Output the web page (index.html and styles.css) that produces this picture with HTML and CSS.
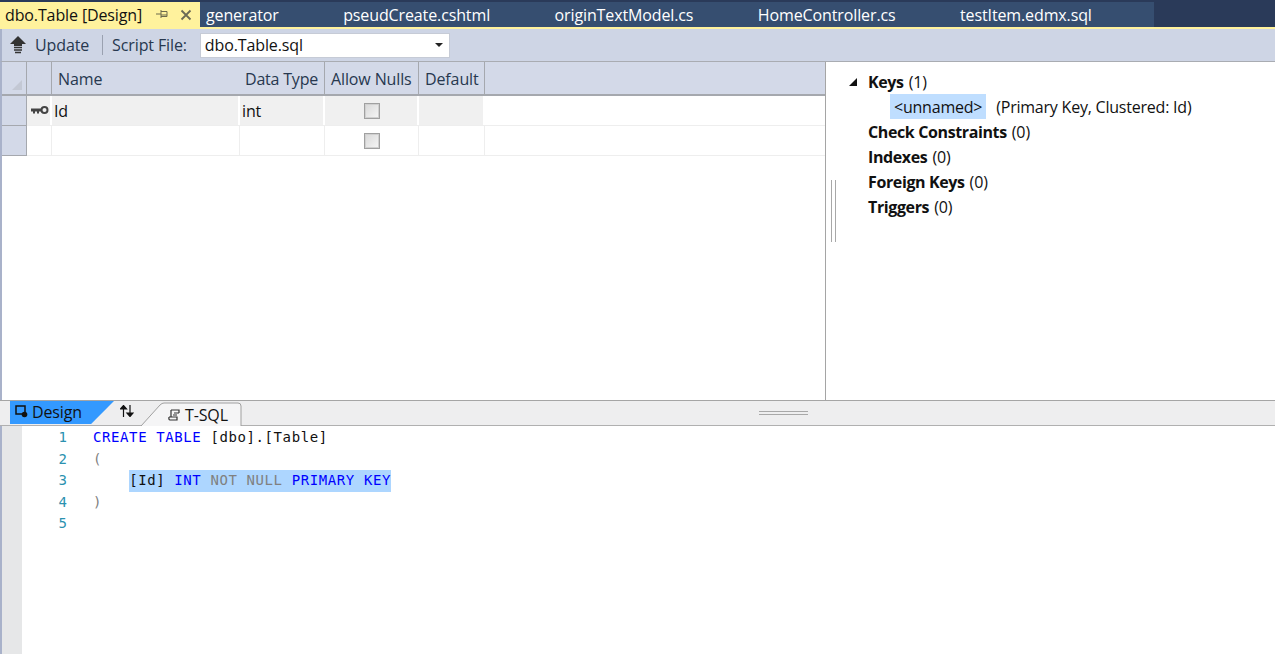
FILE: index.html
```html
<!DOCTYPE html>
<html lang="en">
<head>
<meta charset="utf-8">
<title>dbo.Table [Design]</title>
<link rel="stylesheet" href="styles.css">
</head>
<body>
<div class="tabbar">
  <div class="tab active"><span class="tab-title">dbo.Table [Design]</span>
    <svg class="pin" width="12" height="10" viewBox="0 0 12 10"><path d="M0 5h5M5 1v8M5 2.500h6v5H5M5 6h6" fill="none" stroke="#6d6a4c" stroke-width="1"/></svg>
    <svg class="close" width="12" height="12" viewBox="0 0 12 12"><path d="M1.500 1.500l9 9M10.500 1.500l-9 9" stroke="#6b6a55" stroke-width="1.800" fill="none"/></svg>
  </div>
  <div class="tab">generator</div>
  <div class="tab">pseudCreate.cshtml</div>
  <div class="tab">originTextModel.cs</div>
  <div class="tab">HomeController.cs</div>
  <div class="tab">testItem.edmx.sql</div>
</div>
<div class="accent"></div>
<div class="toolbar">
  <svg class="update-icon" width="18" height="20" viewBox="0 0 18 20"><path d="M9 1L17 9H13V11H5V9H1Z" fill="#333"/><path d="M5 12.500h8M5 15h8M6 17.500h6" stroke="#333" stroke-width="1.600"/></svg>
  <span class="tool-label">Update</span>
  <span class="tool-sep"></span>
  <span class="tool-label script">Script File:</span>
  <div class="combo"><span>dbo.Table.sql</span><i class="combo-arrow"></i></div>
</div>
<div class="designer">
  <div class="grid-pane">
    <div class="row head">
      <div class="cell sel"><i class="corner"></i></div>
      <div class="cell key"></div>
      <div class="cell name">Name</div>
      <div class="cell type">Data Type</div>
      <div class="cell nulls">Allow Nulls</div>
      <div class="cell dflt">Default</div>
    </div>
    <div class="row filled">
      <div class="cell sel"></div>
      <div class="cell key"><svg width="18" height="9" viewBox="0 0 18 9"><path d="M0 2.500h10v3H8v2H6v-2H4v2H2v-2H0Z" fill="#444"/><circle cx="13.500" cy="4" r="3" fill="none" stroke="#444" stroke-width="2"/></svg></div>
      <div class="cell name data">Id</div>
      <div class="cell type data">int</div>
      <div class="cell nulls"><i class="check"></i></div>
      <div class="cell dflt"></div>
    </div>
    <div class="row">
      <div class="cell sel"></div>
      <div class="cell key"></div>
      <div class="cell name"></div>
      <div class="cell type"></div>
      <div class="cell nulls"><i class="check"></i></div>
      <div class="cell dflt"></div>
    </div>
  </div>
  <div class="props">
    <i class="grip"></i>
    <div class="prop"><i class="tri"></i><b>Keys</b> (1)</div>
    <div class="prop-key"><span class="unnamed">&lt;unnamed&gt;</span><span>(Primary Key, Clustered: Id)</span></div>
    <div class="prop"><b>Check Constraints</b> (0)</div>
    <div class="prop"><b>Indexes</b> (0)</div>
    <div class="prop"><b>Foreign Keys</b> (0)</div>
    <div class="prop"><b>Triggers</b> (0)</div>
  </div>
</div>
<div class="viewbar">
  <div class="view-design">
    <svg width="13" height="13" viewBox="0 0 13 13"><rect x="1" y="1" width="9" height="8" fill="none" stroke="#111" stroke-width="1.500"/><circle cx="9.500" cy="9.500" r="2.800" fill="#111"/></svg>
    <span>Design</span>
  </div>
  <svg class="swap" width="14" height="12" viewBox="0 0 14 12"><path d="M3.500 12V3M0.500 4L3.500 0.500 6.500 4Z M10 0V9M7 8L10 11.500 13 8Z" fill="#111" stroke="#111" stroke-width="1.200"/></svg>
  <div class="view-sql">
    <svg class="sql-shape" width="101" height="24" viewBox="0 0 101 24"><path d="M0 24L19 3Q21 1 23 1H97Q100 1 100 4V24" fill="#f5f5f6" stroke="#a0a0a0"/></svg>
    <svg class="sql-icon" width="13" height="12" viewBox="0 0 13 12"><path d="M3 1h8v3M3 1v7M1 8h8v3H2Q0.500 11 1 8M6 4h5M5 6h4" fill="none" stroke="#333" stroke-width="1.200"/></svg>
    <span>T-SQL</span>
  </div>
  <div class="view-grip"></div>
</div>
<div class="editor">
  <div class="margin"></div>
  <div class="nums"><div>1</div><div>2</div><div>3</div><div>4</div><div>5</div></div>
  <pre class="code"><span class="kw">CREATE TABLE</span> [dbo].[Table]
<span class="gr">(</span>
    <span class="hl">[Id] <span class="kw">INT</span> <span class="mut">NOT NULL</span> <span class="kw">PRIMARY KEY</span></span>
<span class="gr">)</span>
</pre>
</div>
</body>
</html>
```
FILE: styles.css
```css
* { box-sizing: border-box; }
html, body { height: 100%; }
body {
  margin: 0;
  height: 654px;
  overflow: hidden;
  display: flex;
  flex-direction: column;
  background: #fff;
  color: #111;
  font-family: "Open Sans", "Noto Sans", sans-serif;
  font-size: 16px;
  letter-spacing: -0.12px;
}
i { display: block; }

/* document tabs */
.tabbar {
  height: 27px;
  flex: none;
  display: flex;
  align-items: flex-end;
  background: #2a3a59;
}
.tab {
  height: 25px;
  padding: 0 58.500px 0 6px;
  display: flex;
  align-items: center;
  color: #fff;
  background: #364e70;
  white-space: nowrap;
}
.tab:last-child { padding-right: 62px; }
.tab.active {
  width: 200px;
  padding: 0 0 0 6px;
  background: #fff29d;
  color: #111;
}
.tab-title { width: 150px; flex: none; margin-left: -1px; margin-right: 1px; }
.pin { flex: none; margin-top: -2px; }
.close { flex: none; margin-left: 12px; }
.accent { height: 2px; flex: none; background: #fff29d; }

/* toolbar */
.toolbar {
  height: 33px;
  flex: none;
  display: flex;
  align-items: center;
  padding-left: 9px;
  background: #ced5e5;
  border-left: 2px solid #a9b2ca;
  border-bottom: 1px solid #a9acb2;
  color: #333;
}
.update-icon { margin-left: -2px; margin-right: 8px; }
.tool-label { color: #27384f; }
.tool-sep { width: 1px; height: 20px; margin: 0 9px 0 13px; background: #9aa1b0; }
.combo {
  width: 250px;
  height: 25px;
  margin-left: 13px;
  padding: 0 5px 0 4px;
  display: flex;
  align-items: center;
  justify-content: space-between;
  background: #fff;
  border: 1px solid #c6cbd6;
  color: #111;
}
.combo-arrow {
  width: 0; height: 0;
  margin-right: 1px;
  border: 4px solid transparent;
  border-top-color: #222;
  border-bottom-width: 0;
}

/* designer */
.designer {
  height: 338px;
  flex: none;
  display: flex;
  border-left: 2px solid #a9b2ca;
}
.grid-pane { width: 824px; flex: none; border-right: 1px solid #a5a5a5; }
.row {
  display: grid;
  grid-template-columns: 25px 25px 188px 85px 94px 66px 1fr;
  height: 30px;
  border-bottom: 1px solid #eee;
}
.row.head {
  height: 34px;
  background: #d3d9e8;
  border-bottom: 2px solid #a5a8ae;
  color: #27384f;
}
.row.head .cell { border-right: 1px solid #a5a8ae; padding: 2px 0 0 6px; }
.row.head .sel, .row.head .key { padding: 0; }
.row.head .name { border-right: 0; }
.row.head .type { padding-left: 5px; letter-spacing: -0.2px; }
.cell {
  display: flex;
  align-items: center;
  border-right: 1px solid #eee;
  white-space: nowrap;
}
.row .sel { background: #d3d9e8; border-right: 1px solid #a5a8ae; border-bottom: 1px solid #a5a8ae; margin-bottom: -1px; }
.row.head .sel { position: relative; border-bottom: 0; margin: 0; }
.corner {
  position: absolute; right: 4px; bottom: 4px;
  width: 0; height: 0;
  border: 5px solid transparent;
  border-right-color: #c3c8d4;
  border-bottom-color: #c3c8d4;
}
.filled .key, .filled .name, .filled .type, .filled .nulls, .filled .dflt { background: #f0f0f0; border-right: 2px solid #fff; }
.key { justify-content: center; padding-left: 2px; }
.data { padding-left: 2px; }
.nulls { padding-left: 39px; }
.check {
  width: 16px; height: 16px;
  background: linear-gradient(135deg, #d8d8d8, #f6f6f6);
  border: 1px solid #a0a0a0;
  box-shadow: inset 0 0 0 1px #d0d0d0;
}

/* properties */
.props { position: relative; flex: 1; padding: 7px 0 0 42px; color: #111; }
.prop { height: 25px; display: flex; align-items: center; gap: 5px; white-space: nowrap; position: relative; }
.prop b { font-weight: 700; letter-spacing: -0.38px; }
.tri {
  position: absolute; left: -19px; top: 9px;
  width: 0; height: 0;
  border: 4px solid transparent;
  border-right-color: #111;
  border-bottom-color: #111;
}
.prop-key { height: 25px; margin-left: 22px; display: flex; align-items: center; gap: 10px; white-space: nowrap; letter-spacing: -0.22px; }
.unnamed { height: 25px; padding: 1px 4px 0; display: flex; align-items: center; background: #bfdeff; }
.grip {
  position: absolute; left: 5px; top: 118px;
  width: 5px; height: 62px;
  border-left: 1px solid #a8a8a8;
  border-right: 1px solid #a8a8a8;
}

/* view switcher */
.viewbar {
  position: relative;
  height: 26px;
  flex: none;
  display: flex;
  align-items: flex-end;
  padding-left: 2px;
  background: #eeeeef;
  border-top: 1px solid #a5a5a5;
  border-bottom: 1px solid #b0b0b0;
}
.view-design {
  width: 104px;
  height: 23px;
  margin-left: 8px;
  padding: 0 0 2px 5px;
  display: flex;
  align-items: center;
  gap: 4px;
  background: #3399ff;
  clip-path: polygon(0 0, 100% 0, 78% 100%, 0 100%);
  align-self: flex-start;
}
.swap { align-self: flex-start; margin: 4px 0 0 6px; }
.view-sql {
  position: relative;
  width: 101px;
  height: 24px;
  margin: 0 0 -1px 7px;
  display: flex;
  align-items: center;
  padding: 1px 0 0 27px;
  gap: 4px;
}
.sql-shape { position: absolute; left: 0; top: 0; }
.sql-icon, .view-sql span { position: relative; }
.view-grip {
  position: absolute; left: 759px; top: 10px;
  width: 49px; height: 4px;
  border-top: 1px solid #a8a8a8;
  border-bottom: 1px solid #a8a8a8;
}

/* editor */
.editor { flex: 1; display: flex; border-left: 2px solid #a9b2ca; font-family: "DejaVu Sans Mono", monospace; font-size: 14px; letter-spacing: 0; line-height: 21.500px; }
.margin { width: 20px; flex: none; background: #e6e7e8; }
.nums { width: 45px; flex: none; padding-top: 1px; text-align: right; color: #2b91af; }
.code { margin: 0; padding: 1px 0 0 26px; font: inherit; letter-spacing: 0.6px; color: #111; }
.kw { color: #0000ff; }
.mut { color: #808080; }
.gr { color: #808080; }
.hl { display: inline-block; height: 22px; background: #add6ff; }
```
